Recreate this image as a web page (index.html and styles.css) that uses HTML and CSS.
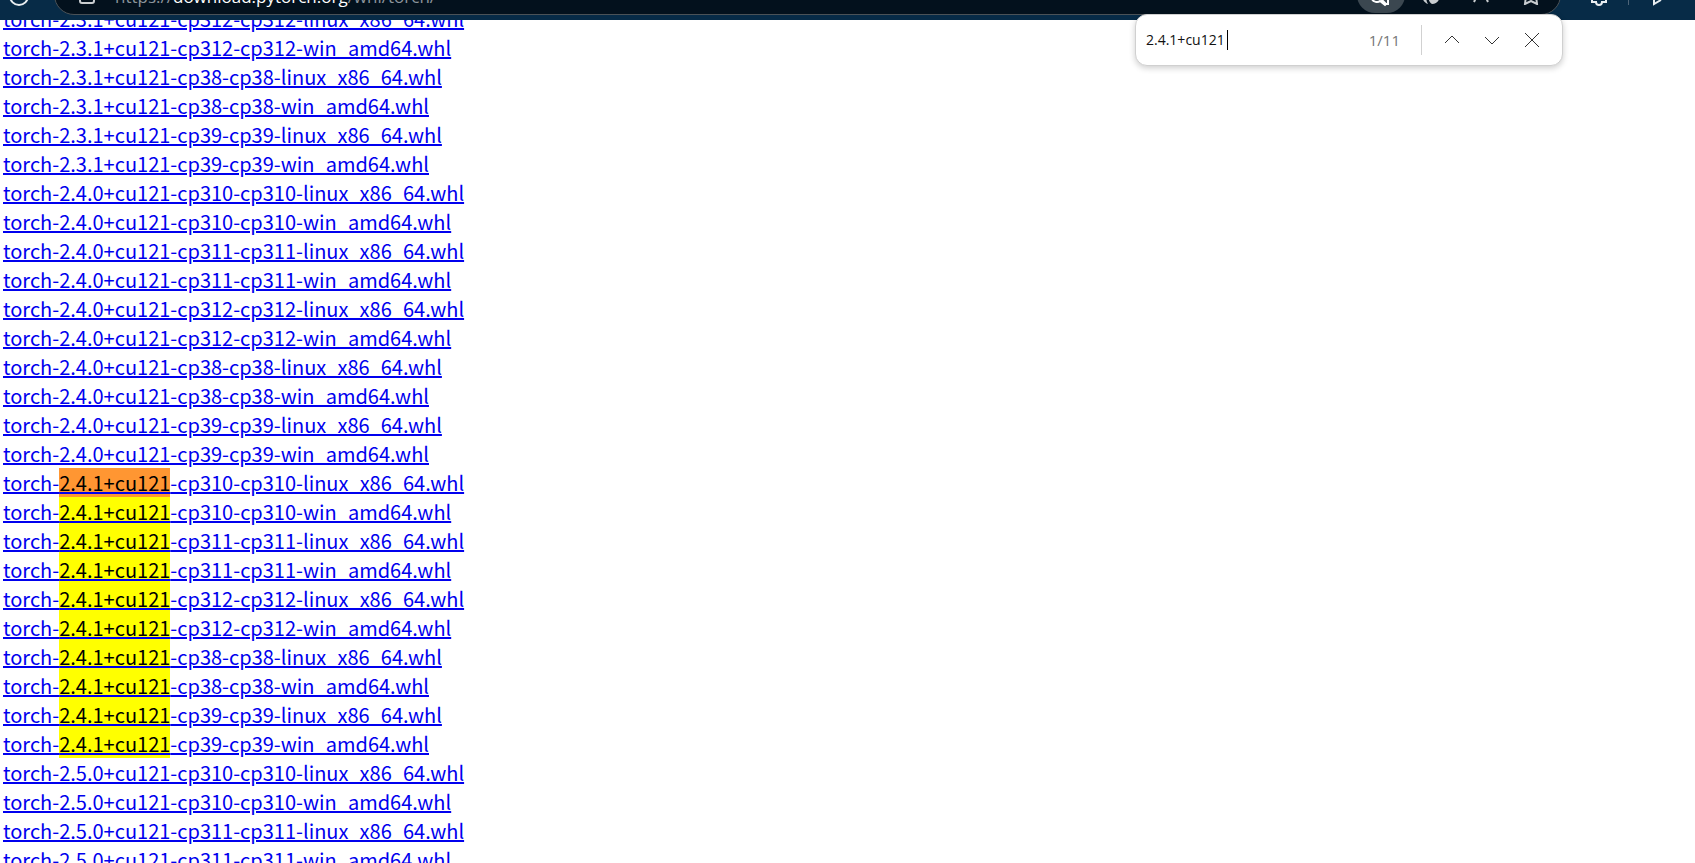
FILE: index.html
```html
<!DOCTYPE html>
<html lang="en">

<head>
    <meta charset="UTF-8">
    <meta name="viewport" content="width=device-width, initial-scale=1.0">
    <title>Links for torch</title>
    <link rel="stylesheet" href="styles.css">
</head>

<body>

    <!-- Browser toolbar -->
    <header class="toolbar">
        <button class="tool refresh" type="button" aria-label="Refresh">
            <svg width="20" height="20" viewBox="0 0 20 20"><circle cx="10" cy="9" r="9" /></svg>
        </button>
        <div class="address">
            <button class="tool" type="button" aria-label="Site information">
                <svg width="20" height="20" viewBox="0 0 20 20"><rect x="3" y="8" width="14" height="10" rx="2" /><path d="M6 8V5a4 4 0 0 1 8 0v3" /></svg>
            </button>
            <p class="url">https://<strong>download.pytorch.org</strong>/whl/torch/</p>
            <button class="tool active" type="button" aria-label="Find on page">
                <svg width="26" height="24" viewBox="0 0 26 24"><path d="M4 16c1 3 6 4 8 2l5 4 1-1-5-5M20 12v9h-3" /></svg>
            </button>
            <button class="tool" type="button" aria-label="Browser essentials">
                <svg class="fill" width="20" height="20" viewBox="0 0 20 20"><path d="M1 10c0 5 3 8 6 9-2-3-2-6-1-9zM8 10c-1 4 0 7 3 9 4 0 7-3 8-7-2 2-5 3-7 1v-3z" /></svg>
            </button>
            <button class="tool" type="button" aria-label="Read aloud">
                <svg width="20" height="20" viewBox="0 0 20 20"><path d="M3 17l7-15 7 15" /></svg>
            </button>
            <button class="tool" type="button" aria-label="Add to favorites">
                <svg width="20" height="20" viewBox="0 0 20 20"><path d="M5 11l-1 8 6-3 6 3-1-8" /></svg>
            </button>
        </div>
        <button class="tool" type="button" aria-label="Extensions">
            <svg width="20" height="20" viewBox="0 0 20 20"><path d="M3 8v7h4c0 4 6 4 6 0h4V8" /></svg>
        </button>
        <span class="divider"></span>
        <button class="tool" type="button" aria-label="Favorites">
            <svg width="20" height="20" viewBox="0 0 20 20"><path d="M6 6v11l7-4" /></svg>
        </button>
    </header>

    <!-- Find bar -->
    <form class="find-bar">
        <input class="find-input" type="text" aria-label="Find on page" value="2.4.1+cu121">
        <span class="caret"></span>
        <output class="find-count">1/11</output>
        <span class="find-divider"></span>
        <button class="find-button" type="button" aria-label="Previous">
            <svg width="16" height="16" viewBox="0 0 16 16"><path d="M1 11l7-7 7 7" /></svg>
        </button>
        <button class="find-button" type="button" aria-label="Next">
            <svg width="16" height="16" viewBox="0 0 16 16"><path d="M1 5l7 7 7-7" /></svg>
        </button>
        <button class="find-button" type="button" aria-label="Close">
            <svg width="16" height="16" viewBox="0 0 16 16"><path d="M1 1l14 14M15 1L1 15" /></svg>
        </button>
    </form>

    <main class="page">
        <ul class="files" id="files"></ul>
    </main>

    <script src="script.js"></script>

</body>

</html>
```
FILE: styles.css
```css
body {
    margin: 0;
    height: 100vh;
    display: flex;
    flex-direction: column;
    overflow: hidden;
    background-color: #fff;
    font-family: "Noto Sans CJK SC", sans-serif;
    font-size: 20px;
}

button {
    padding: 0;
    border: 0;
    background: none;
}

svg {
    display: block;
    fill: none;
    stroke: currentColor;
}

/* Toolbar, only its lower edge shows */
.toolbar {
    flex: none;
    display: flex;
    align-items: flex-end;
    height: 20px;
    box-sizing: border-box;
    padding: 0 13px 5px 9px;
    overflow: hidden;
    background-color: #072b47;
    color: #e8edf1;
}

.tool {
    flex: none;
    display: flex;
    align-items: center;
    justify-content: center;
    width: 48px;
    height: 36px;
    color: inherit;
}

.tool svg {
    stroke-width: 2;
}

.tool .fill {
    fill: currentColor;
    stroke: none;
}

.refresh {
    width: 20px;
}

.address {
    flex: 1;
    display: flex;
    align-items: flex-end;
    gap: 2px;
    height: 40px;
    box-sizing: border-box;
    margin: 0 14px 0 25px;
    padding: 0 5px 1px 8px;
    border: 1px solid #4b5257;
    border-radius: 20px;
    background-color: #03111d;
    color: #c9cdd0;
}

.url {
    flex: 1;
    margin: 0 0 4px 2px;
    color: #8b949b;
    font-family: "Open Sans", sans-serif;
    font-size: 17px;
    line-height: 24px;
}

.url strong {
    color: #fff;
    font-weight: 400;
}

.active {
    border-radius: 18px;
    background-color: #3b4750;
    color: #fff;
}

.divider {
    width: 1px;
    height: 20px;
    margin: 0 5px 10px;
    background-color: #4d6478;
}

/* Find bar */
.find-bar {
    position: absolute;
    top: 14px;
    right: 132px;
    display: flex;
    align-items: center;
    width: 428px;
    height: 52px;
    box-sizing: border-box;
    padding: 0 10px;
    border: 1px solid #d0d0d0;
    border-radius: 12px;
    background-color: #fff;
    box-shadow: 0 2px 6px rgba(0, 0, 0, 0.2);
    font-family: "Open Sans", sans-serif;
    font-size: 14px;
}

.find-input {
    width: 81px;
    padding: 0 0 2px;
    border: 0;
    outline: none;
    color: #111;
    font: inherit;
}

.caret {
    width: 1px;
    height: 20px;
    background-color: #000;
}

.find-count {
    margin-left: auto;
    color: #767676;
    font-size: 15px;
}

.find-divider {
    width: 1px;
    height: 30px;
    margin: 0 10px 0 21px;
    background-color: #d1d1d1;
}

.find-button {
    display: flex;
    align-items: center;
    justify-content: center;
    width: 40px;
    height: 40px;
    color: #333;
}

/* File list */
.page {
    flex: 1;
    overflow: hidden;
}

.files {
    margin: -16px 0 0;
    padding: 0 3px;
    list-style: none;
    line-height: 29px;
}

.files a {
    color: #0000ee;
}

.files mark {
    background-color: #ffff00;
    color: #000;
}

.files .current {
    background-color: #ff9632;
}
```
FILE: script.js
```js
const query = '2.4.1+cu121';
const pythons = ['cp310', 'cp311', 'cp312', 'cp38', 'cp39'];
const platforms = ['linux_x86_64', 'win_amd64'];

// Every wheel of a release, one per python version and platform
function wheels(version) {
    const names = [];
    pythons.forEach(py => {
        platforms.forEach(platform => {
            names.push(`torch-${version}+cu121-${py}-${py}-${platform}.whl`);
        });
    });
    return names;
}

const names = [
    ...wheels('2.3.1').slice(4),
    ...wheels('2.4.0'),
    ...wheels('2.4.1'),
    ...wheels('2.5.0').slice(0, 4)
];

const list = document.getElementById('files');

names.forEach(name => {
    const item = document.createElement('li');
    const link = document.createElement('a');
    link.href = '#';
    link.innerHTML = name.replace(query, `<mark>${query}</mark>`);
    item.appendChild(link);
    list.appendChild(item);
});

// First match is the selected one
list.querySelector('mark').className = 'current';
```
